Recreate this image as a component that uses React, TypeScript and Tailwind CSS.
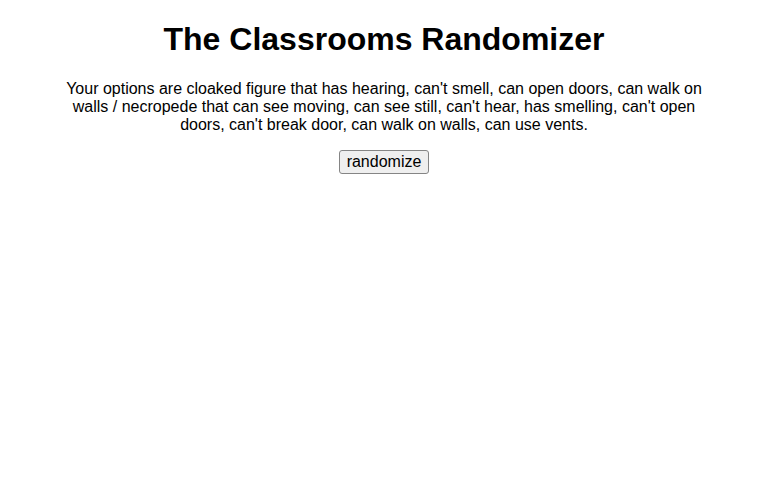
export default function App() {
  return (
    <div className="min-h-screen bg-white text-black text-center" style={{ fontFamily: '"Liberation Sans", Arial, sans-serif' }}>
      <h1 className="text-[32px] leading-[37px] font-bold pt-[21px] mb-[22px]">The Classrooms Randomizer</h1>
      <p className="text-[16px] leading-[18px] max-w-[652px] mx-auto">
        Your options are cloaked figure that has hearing, can't smell, can open doors, can walk on walls / necropede that can see moving, can see still, can't hear, has smelling, can't open doors, can't break door, can walk on walls, can use vents.
      </p>
      <button
        type="button"
        className="mt-[16px] text-[16px] leading-[18px] px-[7px] py-[2px] bg-[#efefef] border border-[#858585] rounded-[3px] hover:bg-[#e5e5e5]"
      >
        randomize
      </button>
    </div>
  );
}
